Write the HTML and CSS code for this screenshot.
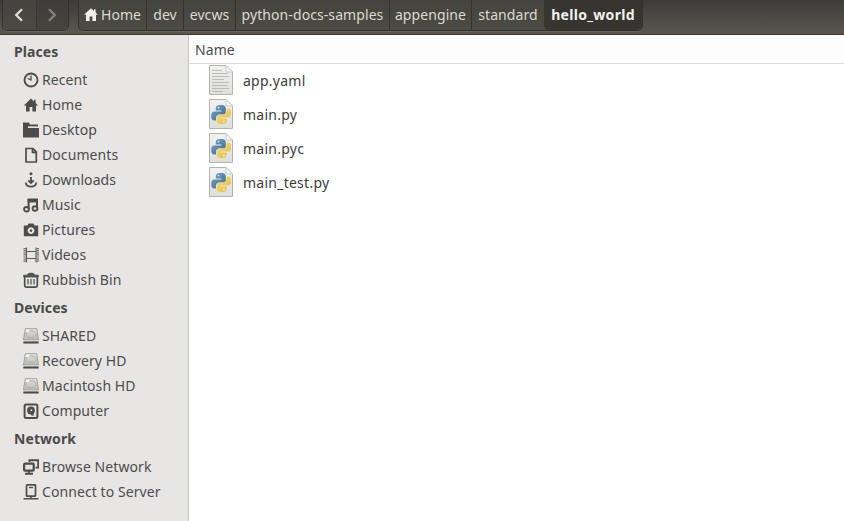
FILE: index.html
```html
<!DOCTYPE html>
<html lang="en">
<head>
<meta charset="utf-8">
<title>hello_world</title>
<link rel="stylesheet" href="styles.css">
</head>
<body>
<svg class="defs" width="0" height="0" aria-hidden="true">
  <defs>
    <linearGradient id="pyblue" x1="0" y1="0" x2="1" y2="1"><stop offset="0" stop-color="#7ea7c9"/><stop offset="1" stop-color="#33668f"/></linearGradient>
    <linearGradient id="pyyellow" x1="0" y1="0" x2="1" y2="1"><stop offset="0" stop-color="#f7e08a"/><stop offset="1" stop-color="#e3b93c"/></linearGradient>
    <linearGradient id="paper" x1="0" y1="0" x2="0" y2="1"><stop offset="0" stop-color="#f2f2f0"/><stop offset="1" stop-color="#dededb"/></linearGradient>
    <linearGradient id="hd" x1="0" y1="0" x2="0" y2="1"><stop offset="0" stop-color="#e2e2df"/><stop offset="1" stop-color="#b9b9b5"/></linearGradient>
    <symbol id="page" viewBox="0 0 24 30">
      <path d="M.5.5H17L23.5 7V29.5H.5Z" fill="url(#paper)" stroke="#b4b4af"/>
      <path d="M17 .5V7H23.5Z" fill="#fbfbfa" stroke="#c8c8c4"/>
    </symbol>
    <symbol id="py" viewBox="0 0 24 30">
      <use href="#page"/>
      <path d="M12 6C7.5 6 6.8 7.6 6.8 9.5V11.6H12.4V12.6H5C2.8 12.6 2.2 14.8 2.2 17.2S3 21.6 5 21.6H7V18.7C7 16.9 8.5 15.6 10.2 15.6H14.2C15.6 15.6 16.8 14.5 16.8 13.2V9.5C16.8 7.6 15.5 6 12 6Z" fill="url(#pyblue)"/>
      <path d="M12.5 25C17 25 17.7 23.4 17.7 21.5V19.4H12.1V18.4H19.5C21.7 18.4 22 16.2 22 13.8S21.5 9.4 19.5 9.4H17.5V12.3C17.5 14.1 16 15.4 14.3 15.4H10.3C8.9 15.4 7.7 16.5 7.7 17.8V21.5C7.7 23.4 9 25 12.5 25Z" fill="url(#pyyellow)"/>
      <circle cx="9.6" cy="8.6" r=".9" fill="#e6eef4"/>
      <circle cx="14.9" cy="22.4" r=".9" fill="#fff6d0"/>
    </symbol>
    <symbol id="drive" viewBox="0 0 16 16">
      <path d="M2.3 .6H13.7L15.6 12H.4Z" fill="url(#hd)" stroke="#8f8f8b" stroke-width=".7"/>
      <ellipse cx="8" cy="6.3" rx="5.2" ry="3.4" fill="none" stroke="#a9a9a5" stroke-width=".8"/>
      <path d="M3.2 1.8H6.6L6 4H2.8Z" fill="#f4f4f2"/>
      <rect x=".3" y="12" width="15.4" height="3.6" rx=".8" fill="#d2d2cf"/>
      <rect x=".3" y="13.6" width="15.4" height="2" rx=".6" fill="#4b4b48"/>
    </symbol>
  </defs>
</svg>

<header class="toolbar">
  <div class="nav">
    <button class="nav-btn nav-back" aria-label="Back"><svg width="12" height="14" viewBox="0 0 12 14"><path d="M9 1.2 3.2 7 9 12.8" fill="none" stroke="#dedcd6" stroke-width="2.3"/></svg></button>
    <button class="nav-btn nav-fwd" aria-label="Forward"><svg width="12" height="14" viewBox="0 0 12 14"><path d="M3 1.2 8.8 7 3 12.8" fill="none" stroke="#86847d" stroke-width="2.3"/></svg></button>
  </div>
  <nav class="path">
    <a class="crumb crumb-home"><svg width="14" height="13" viewBox="0 0 14 13"><path d="M7 .2 0 6.8H2V13H5.6V8.6H8.4V13H12V6.8H14L11.6 4.5V1.3H10V3Z" fill="#f0eee8"/></svg>Home</a>
    <a class="crumb crumb-dev">dev</a>
    <a class="crumb crumb-evcws">evcws</a>
    <a class="crumb crumb-samples">python-docs-samples</a>
    <a class="crumb crumb-app">appengine</a>
    <a class="crumb crumb-std">standard</a>
    <a class="crumb crumb-active">hello_world</a>
  </nav>
</header>

<div class="main">
  <aside class="sidebar">
    <h2 class="side-head">Places</h2>
    <div class="side-item"><svg class="ico" viewBox="0 0 16 16"><circle cx="8" cy="8" r="6.5" fill="none" stroke="#4c4c4c" stroke-width="1.9"/><path d="M8 3.5V8L4.6 6.2" fill="none" stroke="#4c4c4c" stroke-width="1.3"/></svg>Recent</div>
    <div class="side-item"><svg class="ico" viewBox="0 0 16 16"><path d="M8 1.5 .8 8.5H3V14.5H6.6V10H9.4V14.5H13V8.5H15.2L12.6 6V2.8H11V4.4Z" fill="#4c4c4c"/></svg>Home</div>
    <div class="side-item"><svg class="ico" viewBox="0 0 16 16"><path d="M0 .5H6L7 2.5H15V4.5H5V6H0Z" fill="#4c4c4c"/><path d="M0 6H16V15.5H0Z" fill="#4c4c4c"/><path d="M5 5.2H16" stroke="#e7e6e4" stroke-width=".7"/></svg>Desktop</div>
    <div class="side-item"><svg class="ico" viewBox="0 0 16 16"><path d="M3 1.5H10L13.3 4.8V15H3Z M9.5 1.5V5.3H13.3" fill="none" stroke="#4c4c4c" stroke-width="1.7"/></svg>Documents</div>
    <div class="side-item"><svg class="ico" viewBox="0 0 16 16"><circle cx="8" cy="1.8" r="1.5" fill="#4c4c4c"/><path d="M8 5V11M5.3 8.3 8 11 10.7 8.3M2.8 10.5C3 13.3 5 14.6 8 14.6S13 13.3 13.2 10.5" fill="none" stroke="#4c4c4c" stroke-width="1.8"/></svg>Downloads</div>
    <div class="side-item"><svg class="ico" viewBox="0 0 16 16"><path d="M5.6 12V3H14V11" fill="none" stroke="#4c4c4c" stroke-width="2"/><path d="M4.6 1.5H15V5.5H4.6Z" fill="#4c4c4c"/><ellipse cx="3.5" cy="12.3" rx="2.4" ry="2.3" fill="none" stroke="#4c4c4c" stroke-width="1.9"/><ellipse cx="12" cy="11.5" rx="2.4" ry="2.3" fill="none" stroke="#4c4c4c" stroke-width="1.9"/></svg>Music</div>
    <div class="side-item"><svg class="ico" viewBox="0 0 16 16"><path fill-rule="evenodd" d="M.8 3.5H4.5L5.5 1.5H10.5L11.5 3.5H15.2V14.3H.8ZM8 5.2A3.4 3.4 0 1 0 8.01 5.2ZM8 7.3A1.3 1.3 0 1 1 7.99 7.3Z" fill="#4c4c4c"/></svg>Pictures</div>
    <div class="side-item"><svg class="ico" viewBox="0 0 16 16"><path d="M3.5 .5V15.5M13 .5V15.5M3.5 4.5H13M3.5 11.5H13" fill="none" stroke="#5a5a5a" stroke-width="1.1"/><path d="M1.7 1V15.5M14.8 1V15.5" stroke="#6a6a6a" stroke-width="2.4" stroke-dasharray="1.2 .9"/></svg>Videos</div>
    <div class="side-item"><svg class="ico" viewBox="0 0 16 16"><path d="M.7 3.2H15.3V5H.7ZM4.5 3C4.5 1.4 6 1.2 8 1.2S11.5 1.4 11.5 3" fill="#4c4c4c" stroke="#4c4c4c" stroke-width=".8"/><path d="M1.7 5V13.5C1.7 14.7 3 15.2 4 15.2H12C13 15.2 14.3 14.7 14.3 13.5V5" fill="none" stroke="#4c4c4c" stroke-width="1.7"/><path d="M5 7V12.5M8 7V12.5M11 7V12.5" stroke="#4c4c4c" stroke-width="1.2"/></svg>Rubbish Bin</div>

    <h2 class="side-head">Devices</h2>
    <div class="side-item"><svg class="ico"><use href="#drive"/></svg>SHARED</div>
    <div class="side-item"><svg class="ico"><use href="#drive"/></svg>Recovery HD</div>
    <div class="side-item"><svg class="ico"><use href="#drive"/></svg>Macintosh HD</div>
    <div class="side-item"><svg class="ico" viewBox="0 0 16 16"><rect x="1.6" y="1.4" width="12.8" height="13.6" rx="1.5" fill="#e7e6e4" stroke="#4c4c4c" stroke-width="2"/><circle cx="8" cy="7.5" r="3.9" fill="#4c4c4c"/><path d="M7 8 11.6 12.6H8.5Z" fill="#4c4c4c"/><circle cx="8.4" cy="7.2" r=".9" fill="#e7e6e4"/></svg>Computer</div>

    <h2 class="side-head">Network</h2>
    <div class="side-item"><svg class="ico" viewBox="0 0 16 16"><rect x="1.1" y="4.6" width="9.6" height="7" rx=".9" fill="#e7e6e4" stroke="#4c4c4c" stroke-width="2.2"/><path d="M6 12V14M2 14.8H10" stroke="#4c4c4c" stroke-width="1.9"/><path d="M6.5 3V1.2H15.2V8.6H12.5" fill="none" stroke="#4c4c4c" stroke-width="1.9"/></svg>Browse Network</div>
    <div class="side-item"><svg class="ico" viewBox="0 0 16 16"><rect x="3.5" y=".8" width="9" height="11.4" rx=".8" fill="none" stroke="#4c4c4c" stroke-width="1.7"/><path d="M6 3.5H10" stroke="#4c4c4c" stroke-width="1.3"/><path d="M8 12V14M.5 14.8H15.5" stroke="#4c4c4c" stroke-width="1.6"/></svg>Connect to Server</div>
  </aside>

  <section class="files">
    <div class="col-head">Name</div>
    <div class="file"><svg class="file-ico" viewBox="0 0 24 30"><use href="#page"/><path d="M3 5.5H13M3 8.5H19M3 11.5H20M3 14.5H15M3 17.5H20M3 20.5H19M3 23.5H20M3 26.5H14" stroke="#b5b5b1" stroke-width=".9"/></svg>app.yaml</div>
    <div class="file"><svg class="file-ico"><use href="#py"/></svg>main.py</div>
    <div class="file"><svg class="file-ico"><use href="#py"/></svg>main.pyc</div>
    <div class="file"><svg class="file-ico"><use href="#py"/></svg>main_test.py</div>
  </section>
</div>
</body>
</html>
```

FILE: styles.css
```css
* { box-sizing: border-box; }
html, body { margin: 0; height: 100%; overflow: hidden; }
body {
  display: flex;
  flex-direction: column;
  background: #fff;
  font-family: "Noto Sans", "Open Sans", sans-serif;
  font-size: 14px;
  letter-spacing: .08px;
  color: #3c3c3c;
}
.defs { position: absolute; }

.toolbar {
  flex: none;
  height: 35px;
  display: flex;
  align-items: flex-start;
  padding-left: 2px;
  gap: 9px;
  background: linear-gradient(#3c3b37, #5a574e);
  border-bottom: 1px solid #3a3935;
}
.nav {
  display: flex;
  width: 67px;
  height: 31px;
  border: 1px solid #33322e;
  border-top: 0;
  border-radius: 0 0 5px 5px;
  box-shadow: 0 1px 0 #66635a;
  overflow: hidden;
}
.nav-btn {
  flex: 1;
  display: flex;
  align-items: center;
  justify-content: center;
  padding: 0;
  border: 0;
}
.nav-back { background: linear-gradient(#45443f, #4a4944); padding-right: 1px; }
.nav-fwd { background: linear-gradient(#3e3d39, #45443e); border-left: 1px solid #383733; }

.path {
  display: flex;
  height: 31px;
  background: linear-gradient(#44433e, #4c4b44);
  border: 1px solid #33322e;
  border-top: 0;
  border-radius: 0 0 5px 5px;
  box-shadow: 0 1px 0 #66635a;
}
.crumb {
  display: flex;
  align-items: center;
  justify-content: center;
  flex: none;
  color: #dcdad2;
  border-right: 1px solid #33322e;
  padding-bottom: 1px;
}
.crumb svg { margin-right: 3px; }
.crumb-home { width: 68px; }
.crumb-dev { width: 37px; }
.crumb-evcws { width: 52px; }
.crumb-samples { width: 154px; }
.crumb-app { width: 82px; }
.crumb-std { width: 72px; border-right: 0; }
.crumb-active {
  width: 98px;
  font-weight: 700;
  letter-spacing: .3px;
  color: #f2f1ed;
  background: #36352f;
  border-right: 0;
  border-radius: 0 0 5px 5px;
}

.main { flex: 1; display: flex; min-height: 0; }

.sidebar {
  flex: none;
  width: 189px;
  padding-top: 1px;
  background: #e7e6e4;
  border-right: 1px solid #c9c7c3;
  color: #4c4c4c;
}
.side-head {
  margin: 0;
  height: 31px;
  padding: 0 0 0 14px;
  display: flex;
  align-items: center;
  font-size: 14px;
  font-weight: 700;
  color: #4a4a4a;
}
.side-item {
  height: 25px;
  display: flex;
  align-items: center;
  padding-left: 23px;
  gap: 3px;
}
.ico { width: 16px; height: 16px; flex: none; }

.files { flex: 1; min-width: 0; }
.col-head {
  height: 29px;
  padding-left: 6px;
  display: flex;
  align-items: center;
  background: #fdfdfd;
  border-bottom: 1px solid #dcdad6;
  color: #4c4c4c;
}
.file {
  height: 34px;
  display: flex;
  align-items: center;
  padding: 0 0 2px 20px;
  gap: 10px;
  letter-spacing: .25px;
}
.file-ico { width: 24px; height: 30px; flex: none; }
```
